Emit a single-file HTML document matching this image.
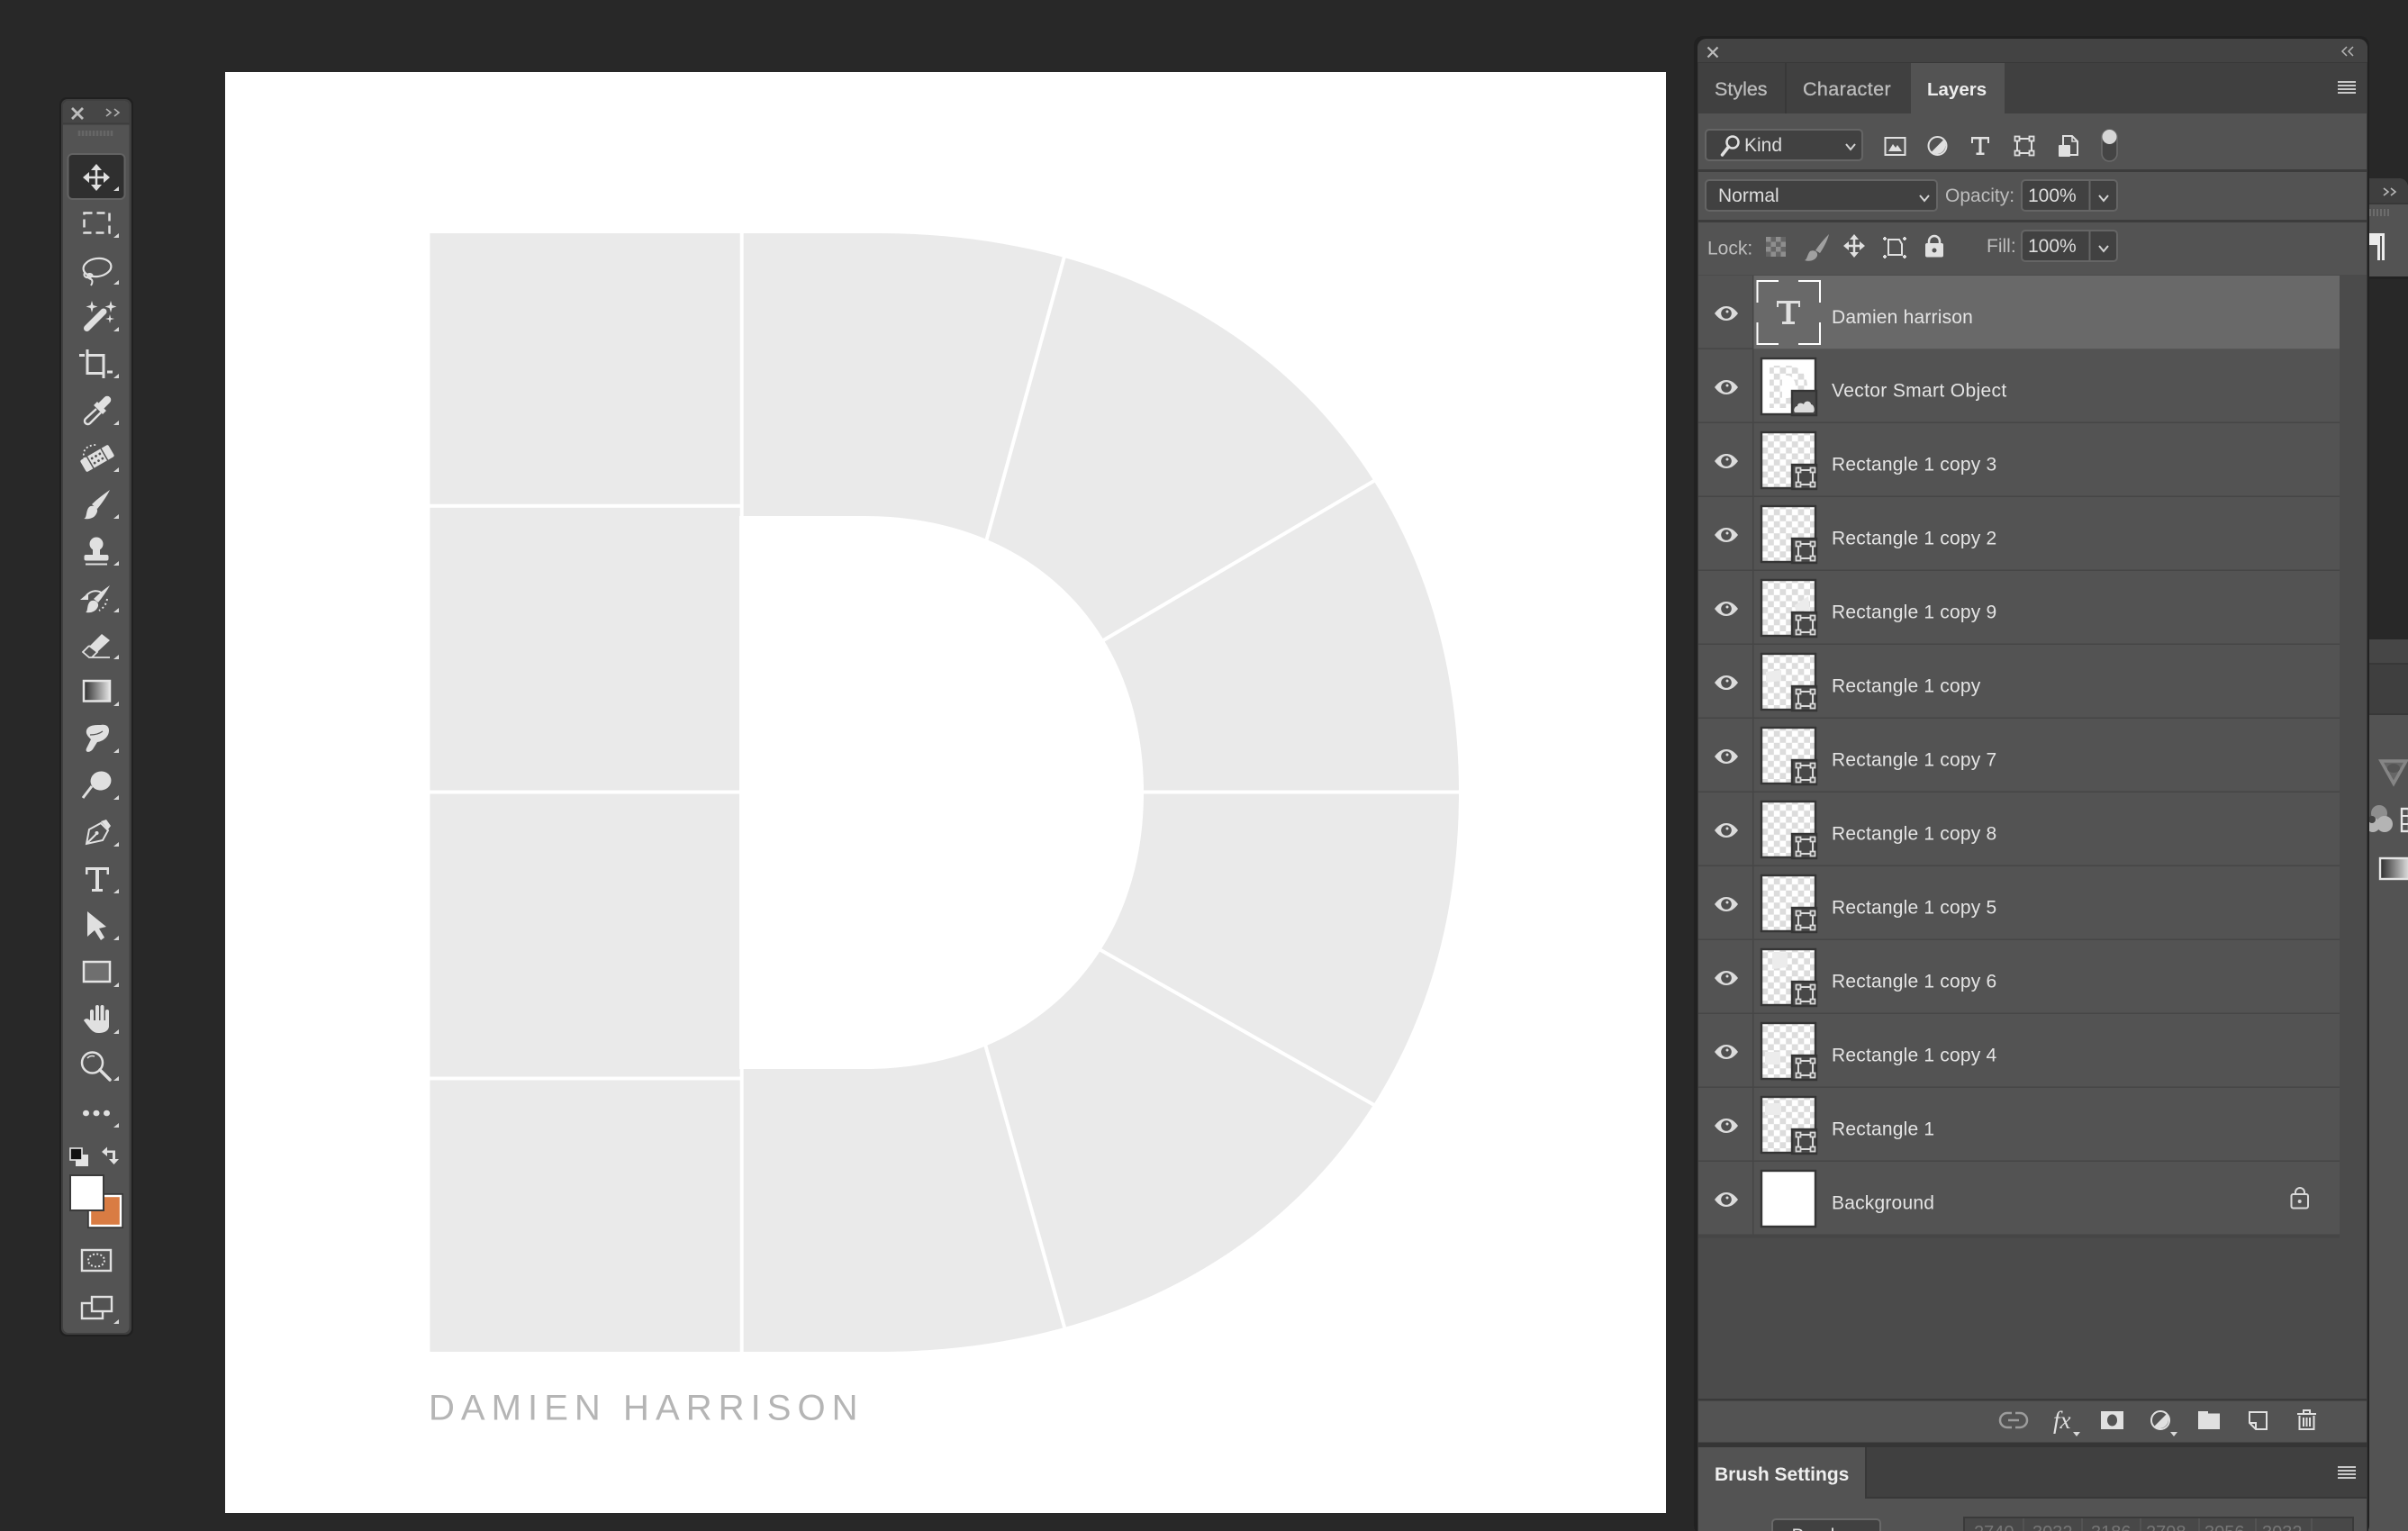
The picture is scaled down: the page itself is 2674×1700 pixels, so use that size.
<!DOCTYPE html>
<html lang="en">
<head>
<meta charset="utf-8">
<title>Photoshop</title>
<style>
html,body{margin:0;padding:0;width:2674px;height:1700px;overflow:hidden;background:#282828}
svg{display:block;font-family:"Liberation Sans",sans-serif}
.lb{font-size:21px;fill:#e4e4e4;letter-spacing:.2px}
.ui{font-size:21px;fill:#dedede}
.dim{font-size:21px;fill:#bdbdbd}
.s{fill:none;stroke:#e0e0e0;stroke-width:2}
.f{fill:#e0e0e0}
.tri{fill:#d8d8d8}
</style>
</head>
<body>
<svg width="2674" height="1700" viewBox="0 0 2674 1700" xmlns="http://www.w3.org/2000/svg">
<defs>
<pattern id="ck" width="13.4" height="13.4" patternUnits="userSpaceOnUse">
<rect width="13.4" height="13.4" fill="#fff"/><rect width="6.7" height="6.7" fill="#dcdcdc"/><rect x="6.7" y="6.7" width="6.7" height="6.7" fill="#dcdcdc"/>
</pattern>
<linearGradient id="gr" x1="0" x2="1" y1="0" y2="0"><stop offset="0" stop-color="#2c2c2c"/><stop offset="1" stop-color="#e4e4e4"/></linearGradient>
<g id="eye">
<path d="M1904 0C1909-6.5 1913-8 1917-8S1925-6.5 1930 0C1925 6.5 1921 8 1917 8S1909 6.5 1904 0Z" fill="#dcdcdc"/>
<circle cx="1917" cy="0" r="5.8" fill="#4f4f4f"/><circle cx="1918" cy="-2" r="1.5" fill="#dcdcdc"/>
</g>
<g id="row">
<rect x="1886" y="0" width="60" height="80.5" fill="#535353"/>
<rect x="1947.5" y="0" width="650.5" height="80.5" fill="#535353"/>
<use href="#eye" y="42"/>
</g>
<g id="thumb">
<rect x="1956" y="10" width="60" height="62" fill="url(#ck)" stroke="#353535" stroke-width="2.4"/>
</g>
<g id="badge">
<rect x="1990" y="46" width="27" height="27" fill="#484848" stroke="#353535" stroke-width="2.4"/>
<path d="M1997 52h16M1997 68h16M1997 52v16M2013 52v16" fill="none" stroke="#d8d8d8" stroke-width="2"/>
<g fill="#484848" stroke="#d8d8d8" stroke-width="1.8"><rect x="1994.5" y="49.5" width="5" height="5"/><rect x="2010.500" y="49.5" width="5" height="5"/><rect x="1994.5" y="65.5" width="5" height="5"/><rect x="2010.5" y="65.5" width="5" height="5"/></g>
</g>
<g id="m"><path d="M126 0h6v-5z" class="tri"/></g>
<g id="burger"><path d="M0 1h20M0 5h20M0 9h20M0 13h20" stroke="#c8c8c8" stroke-width="2" fill="none"/></g>
<g id="chev"><path d="M-5-3L0 3L5-3" fill="none" stroke="#d4d4d4" stroke-width="2"/></g>
<g id="tf"><path d="M3 3h16M3 19h16M3 3v16M19 3v16" fill="none" stroke="#e0e0e0" stroke-width="2"/><g fill="#535353" stroke="#e0e0e0" stroke-width="1.8"><rect x="0.5" y="0.5" width="5" height="5"/><rect x="16.5" y="0.5" width="5" height="5"/><rect x="0.5" y="16.5" width="5" height="5"/><rect x="16.5" y="16.5" width="5" height="5"/></g></g>
</defs>

<!-- workspace -->
<rect width="2674" height="1700" fill="#282828"/>

<!-- document canvas -->
<rect x="250" y="80" width="1600" height="1600" fill="#fff"/>
<path d="M477.5 259H975C1359 259 1620 510.500 1620 880C1620 1249.500 1359 1501 975 1501H477.5Z" fill="#eaeaea"/>
<path d="M821 573H960C1144.500 573 1270 697 1270 880C1270 1063 1144.500 1187 960 1187H821Z" fill="#fff"/>
<g stroke="#fff" stroke-width="4" fill="none">
<path d="M823.7 255V1505"/>
<path d="M470 561.7H822M470 879.5H822M470 1197.5H822"/>
<path d="M1094 605L1186 270"/>
<path d="M1215 717L1536 528"/>
<path d="M1265 879.5H1626"/>
<path d="M1210 1048L1533 1231"/>
<path d="M1093 1156L1186 1488"/>
</g>
<text x="476" y="1576.5" font-size="40" fill="#b5b5b5" letter-spacing="7.05">DAMIEN HARRISON</text>

<!-- tools panel -->
<rect x="66" y="108" width="82" height="1376" rx="8" fill="#202020"/>
<rect x="68" y="110" width="78" height="1372" rx="7" fill="#3f3f3f"/>
<rect x="70" y="112" width="73.500" height="1368" rx="6" fill="#535353"/>
<path d="M70 138V118a6 6 0 0 1 6-6h61.500a6 6 0 0 1 6 6V138Z" fill="#464646"/>
<rect x="70" y="136.500" width="73.500" height="2" fill="#3c3c3c"/>
<path d="M80 120l12 12M92 120l-12 12" stroke="#bdbdbd" stroke-width="2.800" fill="none"/>
<path d="M118 121l5 4l-5 4M127 121l5 4l-5 4" stroke="#b0b0b0" stroke-width="1.600" fill="none"/>
<path d="M88 145v6M92 145v6M96 145v6M100 145v6M104 145v6M108 145v6M112 145v6M116 145v6M120 145v6M124 145v6" stroke="#666" stroke-width="2.500"/>

<rect x="75.500" y="171" width="63" height="50" rx="5" fill="#2f2f2f" stroke="#636363" stroke-width="2"/>
<!-- move -->
<path d="M95 197H119M107 185V209" stroke="#e0e0e0" stroke-width="2.500"/>
<path class="f" d="M107 182l6 7h-12zM107 212l6-7h-12zM92 197l7-6v12zM122 197l-7-6v12z"/>
<!-- marquee -->
<rect x="93.500" y="236.500" width="28" height="22" fill="none" stroke="#e0e0e0" stroke-width="2.500" stroke-dasharray="9 5"/>
<!-- lasso -->
<ellipse cx="108" cy="297" rx="15.500" ry="10" transform="rotate(-8 108 297)" fill="none" stroke="#e0e0e0" stroke-width="2.200"/>
<path d="M94 303c-2 4 2 6 6 5c4-1 3-4-1-4c-3 0-2 5 2 6c2 1 2 4 0 7" fill="none" stroke="#e0e0e0" stroke-width="2"/>
<!-- wand -->
<path d="M96.500 364.500L115 346" stroke="#e0e0e0" stroke-width="7" stroke-linecap="round"/>
<path class="f" d="M102 334l1.500 5 5 1.500-5 1.500-1.500 5-1.500-5-5-1.500 5-1.500zM123 334l1.500 5 5 1.500-5 1.500-1.500 5-1.500-5-5-1.500 5-1.500zM122 349l1 4 4 1-4 1-1 4-1-4-4-1 4-1z"/>
<!-- crop -->
<path d="M97 388V414.500H116M97 394.500H115V420M88 394.500H94M119 413H125" fill="none" stroke="#e0e0e0" stroke-width="3"/>
<!-- eyedropper -->
<path d="M107 454L95 465a3.500 3.500 0 0 0 5 5L112 458" fill="none" stroke="#e0e0e0" stroke-width="2.400"/>
<path d="M106 448L116 458" stroke="#e0e0e0" stroke-width="5.500"/>
<path d="M112 451L119 444" stroke="#e0e0e0" stroke-width="8.500" stroke-linecap="round"/>
<!-- heal -->
<g transform="translate(108 509) rotate(-30)">
<rect x="-18" y="-7.500" width="36" height="15" rx="2" fill="#e0e0e0"/>
<path d="M-9-8V8M9-8V8" stroke="#535353" stroke-width="1.500"/>
<g fill="#535353"><circle cx="-5" cy="-3" r="1.400"/><circle cx="0" cy="-3" r="1.400"/><circle cx="5" cy="-3" r="1.400"/><circle cx="-5" cy="3" r="1.400"/><circle cx="0" cy="3" r="1.400"/><circle cx="5" cy="3" r="1.400"/></g>
</g>
<path d="M94 510C90 500 97 494 107 494" fill="none" stroke="#e0e0e0" stroke-width="1.800" stroke-dasharray="2 2.500"/>
<!-- brush -->
<path class="f" d="M122 544C118 552 113 559 108 565L102 560C108 554 115 549 122 544ZM93 576C97 575 95 567 99 563C103 560 109 563 108 568C106 575 100 577 93 576Z"/>
<!-- stamp -->
<circle cx="107" cy="604" r="7.500" class="f"/><rect x="103" y="609" width="8" height="8" class="f"/>
<rect x="93.500" y="616" width="27" height="6.500" rx="2" class="f"/><path d="M95 626.500H119" stroke="#e0e0e0" stroke-width="2"/>
<!-- history brush -->
<path class="f" d="M122 650C118 657 114 663 109 669L104 665C110 659 116 654 122 650ZM95 680C98 679 96 672 100 668C104 665 110 668 109 673C107 679 101 681 95 680ZM89 666L98 658.500V666Z"/>
<path d="M96 661C102 655 109 655 114 659" fill="none" stroke="#e0e0e0" stroke-width="2"/>
<path d="M119 665C118 671 115 675 110 678" fill="none" stroke="#e0e0e0" stroke-width="2" stroke-dasharray="2 3"/>
<!-- eraser -->
<path class="f" d="M100 717L113 704L122 711L108 724Z"/>
<path d="M99 717L92 724L99 730H122M99 717L108 724L102 730" fill="none" stroke="#e0e0e0" stroke-width="1.800"/>
<!-- gradient -->
<rect x="93" y="756" width="29" height="22.500" fill="url(#gr)" stroke="#e4e4e4" stroke-width="2.500"/>
<!-- smudge -->
<path class="f" d="M96 811C98 805 105 805 112 805C117 804 121 806 121 811C121 818 115 823 108 824L103 832C100 836 94 836 96 831L101 821C98 818 95 815 96 811Z"/>
<path d="M100 816C105 816 110 815 114 812" stroke="#535353" stroke-width="1.200" fill="none"/>
<!-- dodge -->
<ellipse cx="112" cy="867" rx="11.500" ry="10.500" transform="rotate(-12 112 867)" class="f"/>
<path d="M102 873L92 886" stroke="#e0e0e0" stroke-width="3"/>
<!-- pen -->
<path d="M96 937L99 921L112 914L120 922L114 933ZM96 937L107 926" fill="none" stroke="#e0e0e0" stroke-width="2"/>
<circle cx="107.500" cy="925" r="2" class="f"/>
<path class="f" d="M112 912L118 910L123 917L120 921Z"/>
<!-- type -->
<path class="f" d="M95 963h26v8h-2.500v-5H110v21h4v3H102v-3h4V966H97.500v5H95z"/>
<!-- path select -->
<path class="f" d="M97 1012L118 1029L110 1031L116 1041L112 1044L105 1033L97 1040Z"/>
<!-- rect -->
<rect x="93" y="1068" width="29" height="22" fill="#6f6f6f" stroke="#e4e4e4" stroke-width="2.500"/>
<!-- hand -->
<path d="M102 1123V1136M108 1118V1136M113.500 1118V1136M119 1123V1138" stroke="#e0e0e0" stroke-width="4" stroke-linecap="round" fill="none"/>
<path class="f" d="M100 1133H121V1140C120 1146 114 1147 109 1147C103 1147 100 1142 96 1137L93 1133C95 1130 98 1131 100 1133Z"/>
<!-- zoom -->
<ellipse cx="102.500" cy="1180" rx="11.500" ry="11.500" fill="none" stroke="#e0e0e0" stroke-width="2.500"/>
<path d="M111 1188L122 1199" stroke="#e0e0e0" stroke-width="3.500" stroke-linecap="round"/>
<path d="M97 1175C99 1173 102 1172 105 1173" stroke="#e0e0e0" stroke-width="1.500" fill="none"/>
<!-- more -->
<ellipse cx="95.500" cy="1236" rx="3.500" ry="3.300" class="f"/><ellipse cx="107" cy="1236" rx="3.500" ry="3.300" class="f"/><ellipse cx="118.500" cy="1236" rx="3.500" ry="3.300" class="f"/>
<!-- corner marks -->
<use href="#m" y="212"/><use href="#m" y="264"/><use href="#m" y="316"/><use href="#m" y="368"/><use href="#m" y="420"/><use href="#m" y="472"/><use href="#m" y="524"/><use href="#m" y="576"/><use href="#m" y="628"/><use href="#m" y="680"/><use href="#m" y="732"/><use href="#m" y="784"/><use href="#m" y="836"/><use href="#m" y="888"/><use href="#m" y="940"/><use href="#m" y="992"/><use href="#m" y="1044"/><use href="#m" y="1096"/><use href="#m" y="1148"/><use href="#m" y="1200"/><use href="#m" y="1252"/><use href="#m" y="1470"/>
<!-- default colours / swap -->
<rect x="84" y="1282" width="14" height="13" fill="#e4e4e4"/>
<rect x="78" y="1275" width="13" height="13" fill="#111" stroke="#e4e4e4" stroke-width="1.600"/>
<path class="f" d="M113 1279L119 1273.500V1277.500H128V1287H132L126.500 1293L121 1287H125V1280H119V1284Z"/>
<!-- fg/bg -->
<rect x="98" y="1326" width="38" height="37" fill="#d97c43" stroke="#3a3a3a" stroke-width="2"/>
<rect x="100" y="1328" width="34" height="33" fill="#d97c43" stroke="#fff" stroke-width="2.400"/>
<rect x="78" y="1305" width="37" height="39" fill="#fff" stroke="#3a3a3a" stroke-width="2"/>
<!-- quick mask -->
<rect x="91" y="1388" width="32" height="23" fill="none" stroke="#e0e0e0" stroke-width="2.400"/>
<ellipse cx="107" cy="1399.500" rx="9" ry="7" fill="none" stroke="#e0e0e0" stroke-width="2" stroke-dasharray="2 2.200"/>
<!-- screen mode -->
<rect x="91" y="1447" width="23" height="17" fill="none" stroke="#e0e0e0" stroke-width="2.400"/>
<rect x="102" y="1440" width="22" height="16" fill="#535353" stroke="#e0e0e0" stroke-width="2.400"/>

<!-- right collapsed panels -->
<path d="M2630 198H2664a10 10 0 0 1 10 10V307H2630Z" fill="#535353"/>
<path d="M2630 198H2664a10 10 0 0 1 10 10V225H2630Z" fill="#3f3f3f"/>
<rect x="2630" y="225" width="44" height="2" fill="#383838"/>
<rect x="2630" y="307" width="44" height="3" fill="#222"/>
<path d="M2647 209l5 4l-5 4M2655 209l5 4l-5 4" stroke="#b8b8b8" stroke-width="1.600" fill="none"/>
<path d="M2632 232v8M2636 232v8M2640 232v8M2644 232v8M2648 232v8M2652 232v8" stroke="#6c6c6c" stroke-width="2"/>
<path d="M2630 259H2648V289H2645V262H2643V289H2640V272H2630Z" fill="#ececec"/>
<rect x="2630" y="710" width="44" height="990" fill="#535353"/>
<rect x="2630" y="710" width="44" height="83" fill="#3f3f3f"/>
<rect x="2630" y="710" width="44" height="26" fill="#464646"/>
<rect x="2630" y="736" width="44" height="2" fill="#383838"/>
<rect x="2630" y="792" width="44" height="2" fill="#383838"/>
<path d="M2644 845H2672L2658 870Z" fill="#666" stroke="#858585" stroke-width="3.500"/>
<ellipse cx="2658" cy="853" rx="7" ry="5" fill="#555"/>
<circle cx="2642" cy="903" r="9" fill="#8e8e8e"/><circle cx="2635" cy="916" r="8" fill="#b4b4b4"/><circle cx="2648" cy="915" r="9" fill="#b4b4b4"/><circle cx="2634" cy="910" r="4" fill="#444"/>
<rect x="2667" y="898" width="8" height="25" fill="#555" stroke="#e4e4e4" stroke-width="2.400"/>
<path d="M2667 906H2674M2667 915H2674" stroke="#e4e4e4" stroke-width="2"/>
<rect x="2643" y="953" width="33" height="23" fill="url(#gr)" stroke="#e4e4e4" stroke-width="2.400"/>

<!-- layers panel frame -->
<rect x="1881" y="40" width="750" height="1664" rx="10" fill="#212121"/>
<path d="M1885 53a10 10 0 0 1 10-10H2619a10 10 0 0 1 10 10V1700H1885Z" fill="#383838"/>
<path d="M1885 53a10 10 0 0 1 10-10H2619a10 10 0 0 1 10 10V69H1885Z" fill="#434343"/>
<path d="M1896.500 52.500l11 11M1907.500 52.500l-11 11" stroke="#bcbcbc" stroke-width="2.200" fill="none"/>
<path d="M2606 52l-5 5l5 5M2613 52l-5 5l5 5" stroke="#b4b4b4" stroke-width="1.500" fill="none"/>
<!-- tabs -->
<rect x="1886" y="70" width="742" height="56" fill="#404040"/>
<rect x="1982" y="70" width="2" height="56" fill="#383838"/>
<rect x="2122" y="70" width="104" height="58" fill="#535353"/>
<text x="1904" y="106" font-size="21.500" fill="#bdbdbd" stroke="#bdbdbd" stroke-width=".3">Styles</text>
<text x="2002" y="106" font-size="21.500" fill="#bdbdbd" stroke="#bdbdbd" stroke-width=".3" letter-spacing=".4">Character</text>
<text x="2140" y="106" font-size="20.500" font-weight="700" fill="#ededed">Layers</text>
<use href="#burger" x="2596" y="90"/>
<!-- filter row -->
<rect x="1886" y="126" width="742" height="62" fill="#535353"/>
<rect x="1894" y="144" width="174" height="34" rx="4" fill="#414141" stroke="#656565" stroke-width="2"/>
<circle cx="1924" cy="158" r="6.500" fill="none" stroke="#e0e0e0" stroke-width="2.500"/>
<path d="M1919.500 163L1912.500 172" stroke="#e0e0e0" stroke-width="3.500" stroke-linecap="round"/>
<text x="1937" y="168" class="ui">Kind</text>
<use href="#chev" x="2055" y="163"/>
<rect x="2093.500" y="153" width="22" height="19" fill="none" stroke="#e0e0e0" stroke-width="2"/>
<path class="f" d="M2097 168L2102 160L2105 164L2107 161L2112 168Z"/>
<ellipse cx="2151.500" cy="162" rx="10" ry="10" fill="none" stroke="#e0e0e0" stroke-width="2"/>
<path class="f" d="M2158.500 155A10 10 0 0 1 2144.500 169Z"/>
<path class="f" d="M2189 152h20v7h-2v-4.500h-6.500v15h3v2.500h-9v-2.500h3v-15H2191v4.500h-2z"/>
<use href="#tf" x="2237" y="151"/>
<path d="M2291 165V151H2301L2307 157V172H2299" fill="none" stroke="#e0e0e0" stroke-width="2"/>
<path d="M2301 151V157H2307" fill="none" stroke="#e0e0e0" stroke-width="1.500"/>
<rect x="2286" y="161" width="13" height="13" rx="1" class="f"/>
<rect x="2334" y="144" width="17" height="35" rx="8.500" fill="#444" stroke="#6a6a6a" stroke-width="1.600"/>
<circle cx="2342.500" cy="152" r="8" fill="#d6d6d6"/>
<!-- blend row -->
<rect x="1886" y="188" width="742" height="3" fill="#3c3c3c"/>
<rect x="1886" y="191" width="742" height="53" fill="#535353"/>
<rect x="1894" y="200" width="257" height="34" rx="4" fill="#414141" stroke="#656565" stroke-width="2"/>
<text x="1908" y="224" class="ui">Normal</text>
<use href="#chev" x="2137" y="220"/>
<text x="2160" y="224" class="dim">Opacity:</text>
<rect x="2245" y="200" width="106" height="34" rx="4" fill="#414141" stroke="#656565" stroke-width="2"/>
<rect x="2319.500" y="200" width="2" height="34" fill="#656565"/>
<text x="2252" y="224" class="ui">100%</text>
<use href="#chev" x="2336" y="220"/>
<!-- lock row -->
<rect x="1886" y="244" width="742" height="3" fill="#3c3c3c"/>
<rect x="1886" y="247" width="742" height="58" fill="#535353"/>
<text x="1896" y="282.500" class="dim">Lock:</text>
<rect x="1961" y="263" width="22" height="22" fill="#8e8e8e"/>
<g fill="#666"><rect x="1966.500" y="263" width="5.500" height="5.500"/><rect x="1977.500" y="263" width="5.500" height="5.500"/><rect x="1961" y="268.500" width="5.500" height="5.500"/><rect x="1972" y="268.500" width="5.500" height="5.500"/><rect x="1966.500" y="274" width="5.500" height="5.500"/><rect x="1977.500" y="274" width="5.500" height="5.500"/><rect x="1961" y="279.500" width="5.500" height="5.500"/><rect x="1972" y="279.500" width="5.500" height="5.500"/></g>
<path fill="#a0a0a0" d="M2031 260C2029 268 2025 275 2021 281L2016 278C2020 272 2025 266 2031 260ZM2004 289C2007 288 2007 282 2010 279C2014 277 2019 279 2018 284C2016 289 2010 291 2004 289Z"/>
<path d="M2050 273H2068M2059 263V283" stroke="#e0e0e0" stroke-width="2.500"/>
<path class="f" d="M2059 260l5 6h-10zM2059 286l5-6h-10zM2047 273l6-5v10zM2071 273l-6-5v10z"/>
<path d="M2091 265h4M2113 265h4M2091 285h4M2113 285h4M2093 263v4M2115 263v4M2093 283v4M2115 283v4" stroke="#e0e0e0" stroke-width="2" fill="none"/>
<path d="M2097 266H2109L2112 271V283H2097Z" fill="none" stroke="#e0e0e0" stroke-width="2"/>
<path d="M2142 271v-3a6 6 0 0 1 12 0v3" fill="none" stroke="#e0e0e0" stroke-width="2.500"/>
<rect x="2138" y="270" width="20" height="15.500" rx="2" class="f"/><circle cx="2148" cy="278" r="2.500" fill="#535353"/>
<text x="2206" y="280" class="dim">Fill:</text>
<rect x="2245" y="256" width="106" height="34" rx="4" fill="#414141" stroke="#656565" stroke-width="2"/>
<rect x="2319.500" y="256" width="2" height="34" fill="#656565"/>
<text x="2252" y="280" class="ui">100%</text>
<use href="#chev" x="2336" y="276"/>

<!-- layers list -->
<rect x="1886" y="305" width="742" height="1248" fill="#4b4b4b"/>
<rect x="1886" y="306" width="712" height="1068.500" fill="#464646"/>

<use href="#row" y="306"/>
<rect x="1947.500" y="306" width="650.500" height="81.500" fill="#696969"/>
<path d="M1975 312H1951.500V336M1997 312H2021V336M1975 382H1951.500V358M1997 382H2021V358" fill="none" stroke="#fff" stroke-width="2"/>
<path fill="#e0e0e0" d="M1973 334h26v7h-2v-4H1988.500v20H1993v3h-14v-3h4.500V337H1975v4h-2z"/>
<text x="2034" y="359" class="lb">Damien harrison</text>

<use href="#row" y="388"/>
<g transform="translate(0 388)">
<rect x="1956" y="10" width="60" height="62" fill="#fff" stroke="#353535" stroke-width="2.400"/>
<path fill="url(#ck)" fill-rule="evenodd" d="M1965 18H1986C1999 18 2007 29 2007 41C2007 54 1999 65 1986 65H1965ZM1979 29V54H1985C1990 54 1994 48 1994 41C1994 35 1990 29 1985 29Z"/>
<rect x="1990" y="46" width="27" height="27" fill="#484848" stroke="#353535" stroke-width="2.400"/>
<path fill="#dcdcdc" d="M1994 70C1991 70 1992 63 1996 63C1996 59 2001 59 2003 61C2004 56 2011 57 2011 61C2015 61 2016 70 2013 70Z"/>
</g>
<text x="2034" y="440.500" class="lb" style="letter-spacing:.35px">Vector Smart Object</text>

<g transform="translate(0 470)"><use href="#row"/><use href="#thumb"/><use href="#badge"/><text x="2034" y="52.500" class="lb">Rectangle 1 copy 3</text></g>
<g transform="translate(0 552)"><use href="#row"/><use href="#thumb"/><use href="#badge"/><text x="2034" y="52.500" class="lb">Rectangle 1 copy 2</text></g>
<g transform="translate(0 634)"><use href="#row"/><use href="#thumb"/><path d="M1993 38L2008 28L2010 44L1994 45Z" fill="#ececec"/><use href="#badge"/><text x="2034" y="52.500" class="lb">Rectangle 1 copy 9</text></g>
<g transform="translate(0 716)"><use href="#row"/><use href="#thumb"/><path d="M1961 30L1978 28L1978 40L1961 42Z" fill="#ececec"/><use href="#badge"/><text x="2034" y="52.500" class="lb">Rectangle 1 copy</text></g>
<g transform="translate(0 798)"><use href="#row"/><use href="#thumb"/><use href="#badge"/><text x="2034" y="52.500" class="lb">Rectangle 1 copy 7</text></g>
<g transform="translate(0 880)"><use href="#row"/><use href="#thumb"/><use href="#badge"/><text x="2034" y="52.500" class="lb">Rectangle 1 copy 8</text></g>
<g transform="translate(0 962)"><use href="#row"/><use href="#thumb"/><use href="#badge"/><text x="2034" y="52.500" class="lb">Rectangle 1 copy 5</text></g>
<g transform="translate(0 1044)"><use href="#row"/><use href="#thumb"/><path d="M1968 14H1985V30L1968 32Z" fill="#ececec"/><use href="#badge"/><text x="2034" y="52.500" class="lb">Rectangle 1 copy 6</text></g>
<g transform="translate(0 1126)"><use href="#row"/><use href="#thumb"/><path d="M1960 42L1976 42L1976 56L1960 56Z" fill="#ececec"/><use href="#badge"/><text x="2034" y="52.500" class="lb">Rectangle 1 copy 4</text></g>
<g transform="translate(0 1208)"><use href="#row"/><use href="#thumb"/><rect x="1960" y="17" width="18" height="13" fill="#ececec"/><use href="#badge"/><text x="2034" y="52.500" class="lb">Rectangle 1</text></g>
<g transform="translate(0 1290)"><use href="#row"/><rect x="1956" y="10" width="60" height="62" fill="#fff" stroke="#353535" stroke-width="2.400"/><text x="2034" y="52.500" class="lb">Background</text>
<path d="M2549 37v-3a5 5 0 0 1 10 0v3" fill="none" stroke="#d8d8d8" stroke-width="2"/>
<rect x="2544.500" y="36" width="18.500" height="15.500" rx="2" fill="none" stroke="#d8d8d8" stroke-width="2"/><circle cx="2553.700" cy="44" r="2" fill="#d8d8d8"/></g>

<!-- bottom bar -->
<rect x="1886" y="1553" width="742" height="2.500" fill="#3a3a3a"/>
<rect x="1886" y="1555.500" width="742" height="46" fill="#535353"/>
<g fill="none" stroke="#9c9c9c" stroke-width="2.500"><path d="M2234 1569H2229a8 8 0 0 0 0 16H2234M2238 1569H2243a8 8 0 0 1 0 16H2238M2230 1577H2242"/></g>
<text x="2280" y="1586" font-size="27" font-style="italic" fill="#e0e0e0" font-family="Liberation Serif, serif">fx</text>
<path class="tri" d="M2302 1590h8l-4 5z"/>
<rect x="2333" y="1567" width="25" height="20" class="f"/><ellipse cx="2345.500" cy="1577" rx="5.500" ry="6.500" fill="#535353"/>
<ellipse cx="2399" cy="1577" rx="10" ry="10" fill="none" stroke="#e0e0e0" stroke-width="2"/><path class="f" d="M2406 1570A10 10 0 0 1 2392 1584Z"/>
<path class="tri" d="M2410 1590h8l-4 5z"/>
<path class="f" d="M2441 1567h11v2.500h13V1587H2441Z"/>
<path d="M2498 1568H2517V1587H2505L2498 1580ZM2498 1580H2505V1587" fill="none" stroke="#e0e0e0" stroke-width="2"/>
<path d="M2551 1570H2572M2558 1569V1566H2565V1569M2553.500 1572V1587H2569.500V1572M2558 1574V1584M2561.500 1574V1584M2565 1574V1584" fill="none" stroke="#e0e0e0" stroke-width="2"/>

<!-- brush settings -->
<rect x="1885" y="1601.500" width="744" height="5.500" fill="#353535"/>
<rect x="1886" y="1607" width="742" height="55" fill="#404040"/>
<rect x="1886" y="1607" width="185" height="58" fill="#535353"/>
<rect x="2071" y="1607" width="2" height="56" fill="#383838"/>
<rect x="2071" y="1662" width="557" height="2" fill="#383838"/>
<text x="1904" y="1644" font-size="21" font-weight="700" fill="#efefef">Brush Settings</text>
<use href="#burger" x="2596" y="1628"/>
<rect x="1886" y="1664" width="742" height="36" fill="#535353"/>
<rect x="1968" y="1687" width="120" height="40" rx="4" fill="#414141" stroke="#696969" stroke-width="2"/>
<text x="2028" y="1712" font-size="21" fill="#dedede" text-anchor="middle">Brushes</text>
<rect x="2181" y="1685" width="432" height="30" fill="#484848" stroke="#3a3a3a" stroke-width="2"/>
<path d="M2247 1686v14M2312 1686v14M2377 1686v14M2442 1686v14M2505 1686v14M2567 1686v14" stroke="#535353" stroke-width="2"/>
<g font-size="20" fill="#767676"><text x="2192" y="1708">2740</text><text x="2257" y="1708">3032</text><text x="2322" y="1708">3186</text><text x="2383" y="1708">2798</text><text x="2448" y="1708">3056</text><text x="2512" y="1708">3032</text></g>
</svg>
</body>
</html>
